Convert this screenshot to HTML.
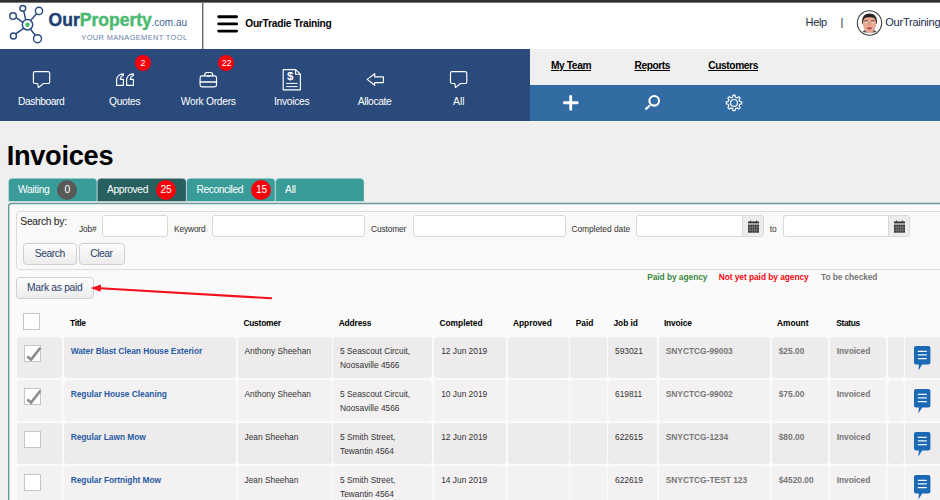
<!DOCTYPE html>
<html lang="en">
<head>
<meta charset="utf-8">
<title>OurTradie - Invoices</title>
<style>
html,body{margin:0;padding:0}
body{width:940px;height:500px;overflow:hidden;position:relative;background:#efefef;
  font-family:"Liberation Sans",Arial,Helvetica,sans-serif;}
.ab,.t,.c,.cb,.inp,.btn,.tab,.badge,.nbadge{position:absolute}
.t{white-space:pre;display:block}
#topbar{left:0;top:0;width:940px;height:2px;background:#2e2e32}
#topline{left:0;top:2px;width:940px;height:1px;background:#77777a}
#header{left:0;top:3px;width:940px;height:46px;background:#fff}
#hdiv{left:202px;top:3px;width:1px;height:46px;background:#686868;box-shadow:1px 0 0 #c4c4c4}
#nav{left:0;top:48.8px;width:530px;height:71.8px;background:#2a4a7b}
#links{left:530px;top:48.8px;width:410px;height:36.4px;background:#efefef}
#tools{left:530px;top:85px;width:410px;height:35.6px;background:#336ba3}
#navline{left:0;top:120.6px;width:940px;height:1px;background:#f6f6f6}
.nbadge{width:16px;height:16px;border-radius:50%;background:#f8000c;color:#fff;font-size:8.8px;line-height:16px;text-align:center;letter-spacing:-0.2px}
.tab{top:178px;height:24px;background:#3a9c98;border-radius:4px 4px 0 0;box-shadow:0 0 0 1px rgba(255,255,255,.5)}
.tab.on{background:#27605f}
.badge{width:20px;height:20px;border-radius:50%;background:#f8000c;color:#fff;font-size:10.3px;line-height:20px;text-align:center;letter-spacing:-0.25px;top:179.6px}
#panel{left:8px;top:202px;width:960px;height:320px;background:#fafafa;border:1px solid #6a9e9c;border-radius:3px;box-sizing:border-box;box-shadow:inset 1px 1px 0 #bfd6d5}
#sbox{left:16.4px;top:211.2px;width:960px;height:58.6px;border:1px solid #dcdcdc;border-radius:4px;box-sizing:border-box;background:#f9f9f9}
.inp{top:215px;height:21.7px;background:#fff;border:1px solid #d9d9d9;border-radius:3px;box-sizing:border-box}
.addon{position:absolute;right:0;top:0;bottom:0;width:19.6px;background:#ececec;border-left:1px solid #d9d9d9}
.btn{border:1px solid #cfcfcf;border-radius:3.5px;box-sizing:border-box;background:linear-gradient(#fdfdfd,#ececec)}
.c{border-radius:3.5px}
.c.a{background:#edebec}
.c.b{background:#f3f1f2}
.cb{width:16.8px;height:16.8px;background:#fff;border:1px solid #c6c6c6;box-sizing:border-box}
</style>
</head>
<body>
<div class="ab" id="header"></div>
<div class="ab" id="topbar"></div>
<div class="ab" id="topline"></div>
<div class="ab" id="hdiv"></div>

<!-- logo -->
<svg class="ab" style="left:0;top:0" width="200" height="49" viewBox="0 0 200 49">
 <g fill="none" stroke="#27487c" stroke-width="1.45">
  <path d="M25.6 19.6 L23.8 11.4 M30.6 20.4 L36.6 13.8 M22.7 22.3 L16.2 17.6 M23.6 28.4 L15.7 33.9 M30.5 29.3 L35.2 35.2"/>
  <circle cx="22.8" cy="8.3" r="2.9" fill="#fff"/>
  <circle cx="39" cy="10.9" r="3.6" fill="#fff"/>
  <circle cx="13" cy="16" r="3.3" fill="#fff"/>
  <circle cx="13.4" cy="36" r="3" fill="#fff"/>
  <circle cx="37.5" cy="38.7" r="4" fill="#fff"/>
  <circle cx="27.5" cy="24.7" r="5.2" fill="#fff"/>
 </g>
 <circle cx="27.5" cy="24.7" r="2.2" fill="#4cb971"/>
 <text x="48.6" y="25.6" font-family="'Liberation Sans',Arial,sans-serif" font-weight="700" font-size="17.8" textLength="103.2" lengthAdjust="spacingAndGlyphs" stroke-width="0.45"><tspan fill="#1f3f73" stroke="#1f3f73">Our</tspan><tspan fill="#4cb971" stroke="#4cb971">Property</tspan></text>
 <text x="151.6" y="25.6" font-family="'Liberation Sans',Arial,sans-serif" font-size="10" fill="#3e5f93" textLength="35.4" lengthAdjust="spacingAndGlyphs">.com.au</text>
 <text x="81.3" y="39.7" font-family="'Liberation Sans',Arial,sans-serif" font-size="7.4" fill="#6781aa" textLength="105.7" lengthAdjust="spacing">YOUR MANAGEMENT TOOL</text>
</svg>

<!-- hamburger -->
<svg class="ab" style="left:216px;top:13px" width="24" height="22" viewBox="0 0 24 22">
 <path d="M2.7 3.8 H20.6 M2.7 10.9 H20.6 M2.7 18.1 H20.6" stroke="#000" stroke-width="2.9" stroke-linecap="round"/>
</svg>

<!-- avatar -->
<svg class="ab" style="left:856px;top:10px" width="27" height="27" viewBox="0 0 27 27">
 <defs><filter id="bl" x="-10%" y="-10%" width="120%" height="120%"><feGaussianBlur stdDeviation="0.45"/></filter>
 <clipPath id="av"><circle cx="13.5" cy="13" r="10.8"/></clipPath></defs>
 <circle cx="13.5" cy="13" r="12.2" fill="#fff" stroke="#3a3a3a" stroke-width="1.05"/>
 <g clip-path="url(#av)"><g filter="url(#bl)">
  <path d="M6.4 21.4 L9.6 19.6 L17.4 19.6 L20.6 21.4 L20.2 22.4 L6.8 22.4 Z" fill="#5b514e"/>
  <path d="M6.1 13.4 C5.4 6.6 9 3.6 13.5 3.6 C18 3.6 21.6 6.6 20.9 13.4 L19.6 14 L7.4 14 Z" fill="#2b2421"/>
  <path d="M7.6 9.8 C6.4 12.6 6.6 16.6 8.6 19.8 C10 22.2 12 23.3 13.5 23.3 C15 23.3 17 22.2 18.4 19.8 C20.4 16.6 20.6 12.6 19.4 9.8 C18.2 7.4 16 7 13.5 7.3 C11 7 8.8 7.4 7.6 9.8 Z" fill="#eaa993"/>
  <path d="M8.4 11 Q10.1 10.1 11.8 11 M15.2 11 Q16.9 10.1 18.6 11" stroke="#4a342c" stroke-width="0.9" fill="none"/>
  <ellipse cx="10.1" cy="12.5" rx="1.2" ry="0.8" fill="#d9dee2"/>
  <ellipse cx="16.9" cy="12.5" rx="1.2" ry="0.8" fill="#d9dee2"/>
  <path d="M13.5 12 V15.4" stroke="#d9927e" stroke-width="1.4"/>
  <ellipse cx="13.5" cy="18.3" rx="2.4" ry="1.1" fill="#a8404f"/>
 </g></g>
</svg>

<div class="ab" id="nav"></div>
<div class="ab" id="links"></div>
<div class="ab" id="tools"></div>
<div class="ab" id="navline"></div>

<!-- nav icons -->
<svg class="ab" style="left:0;top:49px" width="530" height="71" viewBox="0 49 530 71" fill="none" stroke="#fff" stroke-width="1.15" stroke-linejoin="round" stroke-linecap="round">
 <!-- dashboard bubble -->
 <path id="bub" d="M34.9 71.6 H48.2 A1.5 1.5 0 0 1 49.7 73.1 V82 A1.5 1.5 0 0 1 48.2 83.5 H43.4 L38.4 87.6 L37.7 83.5 H34.9 A1.5 1.5 0 0 1 33.4 82 V73.1 A1.5 1.5 0 0 1 34.9 71.6 Z"/>
 <!-- quotes -->
 <path id="q" d="M123.4 73.9 C119.4 74 116.6 76.6 116.6 80.6 V85.3 H123.4 V79.4 H120.3 C120.4 77.4 121.5 75.9 123.4 75.5 Z"/>
 <use href="#q" x="10" y="0"/>
 <!-- briefcase -->
 <rect x="200.1" y="75.8" width="16.4" height="11" rx="1.9"/>
 <path d="M200.1 82 H216.5" stroke-width="1.5"/><path d="M204.7 75.6 V74.8 C204.7 73.1 205.7 72.5 207.2 72.5 H210.2 C211.7 72.5 212.7 73.1 212.7 74.8 V75.6 M207.2 76.2 H209.6"/>
 <!-- invoice -->
 <path d="M283.2 69.6 H295.6 L300.4 74.2 V89.8 H283.2 Z M295.6 69.6 V74.2 H300.4"/>
 <path d="M286.4 83.4 H297.2 M286.4 86.6 H297.2" stroke-width="1"/>
 <!-- allocate arrow -->
 <path d="M367.2 79.4 L374.7 73.7 V76.8 H383.4 V82.6 H374.7 V85.3 Z"/>
 <!-- all bubble -->
 <use href="#bub" x="417.1" y="0"/>
</svg>
<span class="t" style="left:287.1px;top:69.9px;font-size:11.5px;line-height:12px;font-weight:700;color:#fff;letter-spacing:0">$</span>

<div class="nbadge" style="left:134.8px;top:55.4px">2</div>
<div class="nbadge" style="left:218.4px;top:55.3px">22</div>

<!-- tool icons -->
<svg class="ab" style="left:530px;top:85px" width="410" height="36" viewBox="530 85 410 36" fill="none" stroke="#fff" stroke-linecap="round">
 <path d="M564.3 102.8 H577.2 M570.7 96.4 V109.3" stroke-width="2.9"/>
 <circle cx="654.2" cy="100.8" r="4.8" stroke-width="2.1"/>
 <path d="M649.3 106 L646 108.9" stroke-width="2.1"/>
 <g stroke-width="1.15" stroke-linejoin="round">
  <circle cx="734" cy="102.9" r="3.4"/>
  <path d="M732.62 97.16 L732.96 95.17 L735.04 95.17 L735.38 97.16 L737.08 97.87 L738.73 96.70 L740.20 98.17 L739.03 99.82 L739.74 101.52 L741.73 101.86 L741.73 103.94 L739.74 104.28 L739.03 105.98 L740.20 107.63 L738.73 109.10 L737.08 107.93 L735.38 108.64 L735.04 110.63 L732.96 110.63 L732.62 108.64 L730.92 107.93 L729.27 109.10 L727.80 107.63 L728.97 105.98 L728.26 104.28 L726.27 103.94 L726.27 101.86 L728.26 101.52 L728.97 99.82 L727.80 98.17 L729.27 96.70 L730.92 97.87 Z"/>
 </g>
</svg>

<!-- tabs -->
<svg class="ab" style="left:0;top:170px" width="940" height="330" viewBox="0 170 940 330">
 <rect x="8.7" y="203.5" width="960" height="320" rx="3" fill="#fafafa" stroke="#679a98" stroke-width="1.4"/>
 <g stroke="rgba(255,255,255,.55)" stroke-width="0.8">
  <path d="M8.4 201.6 V182.2 a4 4 0 0 1 4 -4 H93.1 a4 4 0 0 1 4 4 V201.6 Z" fill="#3a9c98"/>
  <path d="M186.4 201.6 V182.2 a4 4 0 0 1 4 -4 H271.2 a4 4 0 0 1 4 4 V201.6 Z" fill="#3a9c98"/>
  <path d="M275.3 201.6 V182.2 a4 4 0 0 1 4 -4 H360.1 a4 4 0 0 1 4 4 V201.6 Z" fill="#3a9c98"/>
  <path d="M97.2 201.6 V182.2 a4 4 0 0 1 4 -4 H182.3 a4 4 0 0 1 4 4 V201.6 Z" fill="#27605f"/>
 </g>
</svg>
<div class="badge" style="left:57.3px;background:#595959">0</div>
<div class="badge" style="left:156.1px">25</div>
<div class="badge" style="left:251.4px">15</div>

<div class="ab" id="sbox"></div>
<div class="inp" style="left:102.4px;width:65.3px"></div>
<div class="inp" style="left:212px;width:152.6px"></div>
<div class="inp" style="left:412.5px;width:153px"></div>
<div class="inp" style="left:636.2px;width:127.5px"><div class="addon"></div></div>
<div class="inp" style="left:782.5px;width:127.2px"><div class="addon"></div></div>
<!-- calendar icons -->
<svg class="ab" style="left:748px;top:220px" width="12" height="14" viewBox="0 0 12 14"><use href="#cal"/></svg>
<svg class="ab" style="left:894px;top:220px" width="12" height="14" viewBox="0 0 12 14">
 <g id="cal"><path d="M0 1.5 H11 V3.4 H0 Z" fill="#333"/><path d="M2.5 0.5 V1.8 M8.5 0.5 V1.8" stroke="#333" stroke-width="1.1"/>
 <path d="M0 4.6 H11 V12.7 H0 Z" fill="#333"/>
 <path d="M2.2 4.9 V12.7 M4.4 4.9 V12.7 M6.6 4.9 V12.7 M8.8 4.9 V12.7 M0 7.3 H11 M0 10 H11" stroke="#a8a8a8" stroke-width="0.5" fill="none"/></g>
</svg>

<div class="btn" style="left:23px;top:243px;width:53.6px;height:22px"></div>
<div class="btn" style="left:79px;top:243px;width:45.6px;height:22px"></div>
<div class="btn" style="left:16.4px;top:276.5px;width:77.4px;height:22px"></div>

<!-- header checkbox -->
<div class="cb" style="left:23.1px;top:313.1px"></div>

<div class="c a" style="left:17.2px;top:336.8px;width:45.0px;height:41.4px"></div>
<div class="c a" style="left:64.3px;top:336.8px;width:171.4px;height:41.4px"></div>
<div class="c a" style="left:237.5px;top:336.8px;width:94.5px;height:41.4px"></div>
<div class="c a" style="left:333.2px;top:336.8px;width:99.3px;height:41.4px"></div>
<div class="c a" style="left:434.2px;top:336.8px;width:71.5px;height:41.4px"></div>
<div class="c a" style="left:507.5px;top:336.8px;width:61.2px;height:41.4px"></div>
<div class="c a" style="left:570.2px;top:336.8px;width:36.5px;height:41.4px"></div>
<div class="c a" style="left:608.2px;top:336.8px;width:48.8px;height:41.4px"></div>
<div class="c a" style="left:658.5px;top:336.8px;width:111.5px;height:41.4px"></div>
<div class="c a" style="left:771.7px;top:336.8px;width:56.8px;height:41.4px"></div>
<div class="c a" style="left:830.1px;top:336.8px;width:55.8px;height:41.4px"></div>
<div class="c a" style="left:887.5px;top:336.8px;width:16.0px;height:41.4px"></div>
<div class="c a" style="left:905.1px;top:336.8px;width:54.9px;height:41.4px"></div>
<div class="cb" style="left:24.3px;top:345.0px"><svg viewBox="0 0 17 17" width="17" height="17" style="position:absolute;left:0;top:0"><path d="M2.3 10.4 L6.1 13.6 L15.4 1.8" fill="none" stroke="#8c8c8c" stroke-width="2.6"/></svg></div>
<svg class="ab" style="left:914.4px;top:345.6px" width="17" height="25" viewBox="0 0 17 25"><path d="M2 0 H14.4 A2 2 0 0 1 16.4 2 V16.6 A2 2 0 0 1 14.4 18.6 H8.2 L4.4 24.6 L4.9 18.6 H2 A2 2 0 0 1 0 16.6 V2 A2 2 0 0 1 2 0 Z" fill="#1b69b4"/><path d="M3.8 5.4 H12.8 M3.8 8.9 H12.8 M3.8 12.5 H12.8" stroke="#f2f6fa" stroke-width="1.25"/></svg>
<div class="c b" style="left:17.2px;top:379.8px;width:45.0px;height:41.4px"></div>
<div class="c b" style="left:64.3px;top:379.8px;width:171.4px;height:41.4px"></div>
<div class="c b" style="left:237.5px;top:379.8px;width:94.5px;height:41.4px"></div>
<div class="c b" style="left:333.2px;top:379.8px;width:99.3px;height:41.4px"></div>
<div class="c b" style="left:434.2px;top:379.8px;width:71.5px;height:41.4px"></div>
<div class="c b" style="left:507.5px;top:379.8px;width:61.2px;height:41.4px"></div>
<div class="c b" style="left:570.2px;top:379.8px;width:36.5px;height:41.4px"></div>
<div class="c b" style="left:608.2px;top:379.8px;width:48.8px;height:41.4px"></div>
<div class="c b" style="left:658.5px;top:379.8px;width:111.5px;height:41.4px"></div>
<div class="c b" style="left:771.7px;top:379.8px;width:56.8px;height:41.4px"></div>
<div class="c b" style="left:830.1px;top:379.8px;width:55.8px;height:41.4px"></div>
<div class="c b" style="left:887.5px;top:379.8px;width:16.0px;height:41.4px"></div>
<div class="c b" style="left:905.1px;top:379.8px;width:54.9px;height:41.4px"></div>
<div class="cb" style="left:24.3px;top:388.0px"><svg viewBox="0 0 17 17" width="17" height="17" style="position:absolute;left:0;top:0"><path d="M2.3 10.4 L6.1 13.6 L15.4 1.8" fill="none" stroke="#8c8c8c" stroke-width="2.6"/></svg></div>
<svg class="ab" style="left:914.4px;top:388.6px" width="17" height="25" viewBox="0 0 17 25"><path d="M2 0 H14.4 A2 2 0 0 1 16.4 2 V16.6 A2 2 0 0 1 14.4 18.6 H8.2 L4.4 24.6 L4.9 18.6 H2 A2 2 0 0 1 0 16.6 V2 A2 2 0 0 1 2 0 Z" fill="#1b69b4"/><path d="M3.8 5.4 H12.8 M3.8 8.9 H12.8 M3.8 12.5 H12.8" stroke="#f2f6fa" stroke-width="1.25"/></svg>
<div class="c a" style="left:17.2px;top:422.8px;width:45.0px;height:41.4px"></div>
<div class="c a" style="left:64.3px;top:422.8px;width:171.4px;height:41.4px"></div>
<div class="c a" style="left:237.5px;top:422.8px;width:94.5px;height:41.4px"></div>
<div class="c a" style="left:333.2px;top:422.8px;width:99.3px;height:41.4px"></div>
<div class="c a" style="left:434.2px;top:422.8px;width:71.5px;height:41.4px"></div>
<div class="c a" style="left:507.5px;top:422.8px;width:61.2px;height:41.4px"></div>
<div class="c a" style="left:570.2px;top:422.8px;width:36.5px;height:41.4px"></div>
<div class="c a" style="left:608.2px;top:422.8px;width:48.8px;height:41.4px"></div>
<div class="c a" style="left:658.5px;top:422.8px;width:111.5px;height:41.4px"></div>
<div class="c a" style="left:771.7px;top:422.8px;width:56.8px;height:41.4px"></div>
<div class="c a" style="left:830.1px;top:422.8px;width:55.8px;height:41.4px"></div>
<div class="c a" style="left:887.5px;top:422.8px;width:16.0px;height:41.4px"></div>
<div class="c a" style="left:905.1px;top:422.8px;width:54.9px;height:41.4px"></div>
<div class="cb" style="left:24.3px;top:431.0px"></div>
<svg class="ab" style="left:914.4px;top:431.6px" width="17" height="25" viewBox="0 0 17 25"><path d="M2 0 H14.4 A2 2 0 0 1 16.4 2 V16.6 A2 2 0 0 1 14.4 18.6 H8.2 L4.4 24.6 L4.9 18.6 H2 A2 2 0 0 1 0 16.6 V2 A2 2 0 0 1 2 0 Z" fill="#1b69b4"/><path d="M3.8 5.4 H12.8 M3.8 8.9 H12.8 M3.8 12.5 H12.8" stroke="#f2f6fa" stroke-width="1.25"/></svg>
<div class="c b" style="left:17.2px;top:465.7px;width:45.0px;height:41.4px"></div>
<div class="c b" style="left:64.3px;top:465.7px;width:171.4px;height:41.4px"></div>
<div class="c b" style="left:237.5px;top:465.7px;width:94.5px;height:41.4px"></div>
<div class="c b" style="left:333.2px;top:465.7px;width:99.3px;height:41.4px"></div>
<div class="c b" style="left:434.2px;top:465.7px;width:71.5px;height:41.4px"></div>
<div class="c b" style="left:507.5px;top:465.7px;width:61.2px;height:41.4px"></div>
<div class="c b" style="left:570.2px;top:465.7px;width:36.5px;height:41.4px"></div>
<div class="c b" style="left:608.2px;top:465.7px;width:48.8px;height:41.4px"></div>
<div class="c b" style="left:658.5px;top:465.7px;width:111.5px;height:41.4px"></div>
<div class="c b" style="left:771.7px;top:465.7px;width:56.8px;height:41.4px"></div>
<div class="c b" style="left:830.1px;top:465.7px;width:55.8px;height:41.4px"></div>
<div class="c b" style="left:887.5px;top:465.7px;width:16.0px;height:41.4px"></div>
<div class="c b" style="left:905.1px;top:465.7px;width:54.9px;height:41.4px"></div>
<div class="cb" style="left:24.3px;top:473.9px"></div>
<svg class="ab" style="left:914.4px;top:474.5px" width="17" height="25" viewBox="0 0 17 25"><path d="M2 0 H14.4 A2 2 0 0 1 16.4 2 V16.6 A2 2 0 0 1 14.4 18.6 H8.2 L4.4 24.6 L4.9 18.6 H2 A2 2 0 0 1 0 16.6 V2 A2 2 0 0 1 2 0 Z" fill="#1b69b4"/><path d="M3.8 5.4 H12.8 M3.8 8.9 H12.8 M3.8 12.5 H12.8" stroke="#f2f6fa" stroke-width="1.25"/></svg>

<span class="t" style="left:805.50px;top:16.00px;font-size:11.0px;line-height:13.2px;letter-spacing:-0.300px;color:#1c2b4a;">Help</span>
<span class="t" style="left:840.60px;top:16.00px;font-size:11.0px;line-height:13.2px;letter-spacing:0.000px;color:#1c2b4a;">|</span>
<span class="t" style="left:885.30px;top:16.00px;font-size:11.0px;line-height:13.2px;letter-spacing:-0.245px;color:#1c2b4a;">OurTraining</span>
<span class="t" style="left:245.20px;top:18.00px;font-size:10.2px;line-height:12.24px;letter-spacing:-0.232px;color:#000;font-weight:700;">OurTradie Training</span>
<span class="t" style="left:17.90px;top:96.00px;font-size:10.3px;line-height:12.36px;letter-spacing:-0.431px;color:#fff;">Dashboard</span>
<span class="t" style="left:109.00px;top:96.00px;font-size:10.3px;line-height:12.36px;letter-spacing:-0.330px;color:#fff;">Quotes</span>
<span class="t" style="left:180.80px;top:96.00px;font-size:10.3px;line-height:12.36px;letter-spacing:-0.302px;color:#fff;">Work Orders</span>
<span class="t" style="left:274.00px;top:96.00px;font-size:10.3px;line-height:12.36px;letter-spacing:-0.304px;color:#fff;">Invoices</span>
<span class="t" style="left:357.70px;top:96.00px;font-size:10.3px;line-height:12.36px;letter-spacing:-0.358px;color:#fff;">Allocate</span>
<span class="t" style="left:453.00px;top:96.00px;font-size:10.3px;line-height:12.36px;letter-spacing:0.072px;color:#fff;">All</span>
<span class="t" style="left:551.00px;top:60.00px;font-size:10.2px;line-height:12.24px;letter-spacing:-0.397px;color:#000;font-weight:700;text-decoration:underline;">My Team</span>
<span class="t" style="left:634.50px;top:60.00px;font-size:10.2px;line-height:12.24px;letter-spacing:-0.438px;color:#000;font-weight:700;text-decoration:underline;">Reports</span>
<span class="t" style="left:708.20px;top:60.00px;font-size:10.2px;line-height:12.24px;letter-spacing:-0.381px;color:#000;font-weight:700;text-decoration:underline;">Customers</span>
<span class="t" style="left:6.70px;top:140.00px;font-size:27.2px;line-height:32.64px;letter-spacing:-0.283px;color:#000;font-weight:700;">Invoices</span>
<span class="t" style="left:18.00px;top:184.00px;font-size:10.3px;line-height:12.36px;letter-spacing:-0.371px;color:#fff;">Waiting</span>
<span class="t" style="left:107.00px;top:184.00px;font-size:10.3px;line-height:12.36px;letter-spacing:-0.379px;color:#fff;">Approved</span>
<span class="t" style="left:196.40px;top:184.00px;font-size:10.3px;line-height:12.36px;letter-spacing:-0.424px;color:#fff;">Reconciled</span>
<span class="t" style="left:285.00px;top:184.00px;font-size:10.3px;line-height:12.36px;letter-spacing:-0.228px;color:#fff;">All</span>
<span class="t" style="left:20.30px;top:216.00px;font-size:10.3px;line-height:12.36px;letter-spacing:-0.273px;color:#222;">Search by:</span>
<span class="t" style="left:79.00px;top:224.00px;font-size:8.37px;line-height:10.04px;letter-spacing:-0.193px;color:#333;">Job#</span>
<span class="t" style="left:174.10px;top:224.00px;font-size:8.37px;line-height:10.04px;letter-spacing:-0.162px;color:#333;">Keyword</span>
<span class="t" style="left:371.00px;top:224.00px;font-size:8.37px;line-height:10.04px;letter-spacing:-0.121px;color:#333;">Customer</span>
<span class="t" style="left:571.40px;top:224.00px;font-size:8.37px;line-height:10.04px;letter-spacing:-0.021px;color:#333;">Completed date</span>
<span class="t" style="left:769.80px;top:224.00px;font-size:8.37px;line-height:10.04px;letter-spacing:0.000px;color:#333;">to</span>
<span class="t" style="left:34.80px;top:248.00px;font-size:10.3px;line-height:12.36px;letter-spacing:-0.450px;color:#2b3f6b;">Search</span>
<span class="t" style="left:90.20px;top:248.00px;font-size:10.3px;line-height:12.36px;letter-spacing:-0.450px;color:#2b3f6b;">Clear</span>
<span class="t" style="left:27.10px;top:282.00px;font-size:10.3px;line-height:12.36px;letter-spacing:-0.302px;color:#2b3f6b;">Mark as paid</span>
<span class="t" style="left:647.20px;top:272.00px;font-size:8.37px;line-height:10.04px;letter-spacing:-0.047px;color:#3b873e;font-weight:700;">Paid by agency</span>
<span class="t" style="left:718.70px;top:272.00px;font-size:8.37px;line-height:10.04px;letter-spacing:-0.048px;color:#f6060f;font-weight:700;">Not yet paid by agency</span>
<span class="t" style="left:821.10px;top:272.00px;font-size:8.37px;line-height:10.04px;letter-spacing:-0.095px;color:#777;font-weight:700;">To be checked</span>
<span class="t" style="left:70.00px;top:318.00px;font-size:8.4px;line-height:10.08px;letter-spacing:-0.277px;color:#000;font-weight:700;">Title</span>
<span class="t" style="left:243.40px;top:318.00px;font-size:8.4px;line-height:10.08px;letter-spacing:-0.219px;color:#000;font-weight:700;">Customer</span>
<span class="t" style="left:338.70px;top:318.00px;font-size:8.4px;line-height:10.08px;letter-spacing:-0.142px;color:#000;font-weight:700;">Address</span>
<span class="t" style="left:439.50px;top:318.00px;font-size:8.4px;line-height:10.08px;letter-spacing:-0.020px;color:#000;font-weight:700;">Completed</span>
<span class="t" style="left:513.00px;top:318.00px;font-size:8.4px;line-height:10.08px;letter-spacing:-0.039px;color:#000;font-weight:700;">Approved</span>
<span class="t" style="left:575.70px;top:318.00px;font-size:8.4px;line-height:10.08px;letter-spacing:-0.024px;color:#000;font-weight:700;">Paid</span>
<span class="t" style="left:613.50px;top:318.00px;font-size:8.4px;line-height:10.08px;letter-spacing:-0.069px;color:#000;font-weight:700;">Job id</span>
<span class="t" style="left:663.90px;top:318.00px;font-size:8.4px;line-height:10.08px;letter-spacing:-0.133px;color:#000;font-weight:700;">Invoice</span>
<span class="t" style="left:777.00px;top:318.00px;font-size:8.4px;line-height:10.08px;letter-spacing:-0.028px;color:#000;font-weight:700;">Amount</span>
<span class="t" style="left:836.30px;top:318.00px;font-size:8.4px;line-height:10.08px;letter-spacing:-0.327px;color:#000;font-weight:700;">Status</span>
<span class="t" style="left:70.70px;top:346.00px;font-size:8.4px;line-height:10.08px;letter-spacing:-0.040px;color:#2a5ba3;font-weight:700;">Water Blast Clean House Exterior</span>
<span class="t" style="left:244.50px;top:346.00px;font-size:8.37px;line-height:10.04px;letter-spacing:0.000px;color:#333;">Anthony Sheehan</span>
<span class="t" style="left:340.00px;top:346.00px;font-size:8.37px;line-height:10.04px;letter-spacing:0.000px;color:#333;">5 Seascout Circuit,</span>
<span class="t" style="left:340.00px;top:360.00px;font-size:8.37px;line-height:10.04px;letter-spacing:0.000px;color:#333;">Noosaville 4566</span>
<span class="t" style="left:441.20px;top:346.00px;font-size:8.37px;line-height:10.04px;letter-spacing:0.000px;color:#333;">12 Jun 2019</span>
<span class="t" style="left:615.00px;top:346.00px;font-size:8.37px;line-height:10.04px;letter-spacing:0.000px;color:#333;">593021</span>
<span class="t" style="left:665.70px;top:346.00px;font-size:8.4px;line-height:10.08px;letter-spacing:0.000px;color:#777;font-weight:700;">SNYCTCG-99003</span>
<span class="t" style="left:778.70px;top:346.00px;font-size:8.4px;line-height:10.08px;letter-spacing:0.000px;color:#777;font-weight:700;">$25.00</span>
<span class="t" style="left:836.70px;top:346.00px;font-size:8.4px;line-height:10.08px;letter-spacing:-0.051px;color:#777;font-weight:700;">Invoiced</span>
<span class="t" style="left:70.70px;top:389.00px;font-size:8.4px;line-height:10.08px;letter-spacing:-0.028px;color:#2a5ba3;font-weight:700;">Regular House Cleaning</span>
<span class="t" style="left:244.50px;top:389.00px;font-size:8.37px;line-height:10.04px;letter-spacing:0.000px;color:#333;">Anthony Sheehan</span>
<span class="t" style="left:340.00px;top:389.00px;font-size:8.37px;line-height:10.04px;letter-spacing:0.000px;color:#333;">5 Seascout Circuit,</span>
<span class="t" style="left:340.00px;top:403.00px;font-size:8.37px;line-height:10.04px;letter-spacing:0.000px;color:#333;">Noosaville 4566</span>
<span class="t" style="left:441.20px;top:389.00px;font-size:8.37px;line-height:10.04px;letter-spacing:0.000px;color:#333;">10 Jun 2019</span>
<span class="t" style="left:615.00px;top:389.00px;font-size:8.37px;line-height:10.04px;letter-spacing:0.000px;color:#333;">619811</span>
<span class="t" style="left:665.70px;top:389.00px;font-size:8.4px;line-height:10.08px;letter-spacing:0.000px;color:#777;font-weight:700;">SNYCTCG-99002</span>
<span class="t" style="left:778.70px;top:389.00px;font-size:8.4px;line-height:10.08px;letter-spacing:0.000px;color:#777;font-weight:700;">$75.00</span>
<span class="t" style="left:836.70px;top:389.00px;font-size:8.4px;line-height:10.08px;letter-spacing:-0.051px;color:#777;font-weight:700;">Invoiced</span>
<span class="t" style="left:70.70px;top:432.00px;font-size:8.4px;line-height:10.08px;letter-spacing:-0.049px;color:#2a5ba3;font-weight:700;">Regular Lawn Mow</span>
<span class="t" style="left:244.50px;top:432.00px;font-size:8.37px;line-height:10.04px;letter-spacing:0.000px;color:#333;">Jean Sheehan</span>
<span class="t" style="left:340.00px;top:432.00px;font-size:8.37px;line-height:10.04px;letter-spacing:0.000px;color:#333;">5 Smith Street,</span>
<span class="t" style="left:340.00px;top:446.00px;font-size:8.37px;line-height:10.04px;letter-spacing:0.000px;color:#333;">Tewantin 4564</span>
<span class="t" style="left:441.20px;top:432.00px;font-size:8.37px;line-height:10.04px;letter-spacing:0.000px;color:#333;">12 Jun 2019</span>
<span class="t" style="left:615.00px;top:432.00px;font-size:8.37px;line-height:10.04px;letter-spacing:0.000px;color:#333;">622615</span>
<span class="t" style="left:665.70px;top:432.00px;font-size:8.4px;line-height:10.08px;letter-spacing:0.000px;color:#777;font-weight:700;">SNYCTCG-1234</span>
<span class="t" style="left:778.70px;top:432.00px;font-size:8.4px;line-height:10.08px;letter-spacing:0.000px;color:#777;font-weight:700;">$80.00</span>
<span class="t" style="left:836.70px;top:432.00px;font-size:8.4px;line-height:10.08px;letter-spacing:-0.051px;color:#777;font-weight:700;">Invoiced</span>
<span class="t" style="left:70.70px;top:475.00px;font-size:8.4px;line-height:10.08px;letter-spacing:-0.039px;color:#2a5ba3;font-weight:700;">Regular Fortnight Mow</span>
<span class="t" style="left:244.50px;top:475.00px;font-size:8.37px;line-height:10.04px;letter-spacing:0.000px;color:#333;">Jean Sheehan</span>
<span class="t" style="left:340.00px;top:475.00px;font-size:8.37px;line-height:10.04px;letter-spacing:0.000px;color:#333;">5 Smith Street,</span>
<span class="t" style="left:340.00px;top:489.00px;font-size:8.37px;line-height:10.04px;letter-spacing:0.000px;color:#333;">Tewantin 4564</span>
<span class="t" style="left:441.20px;top:475.00px;font-size:8.37px;line-height:10.04px;letter-spacing:0.000px;color:#333;">14 Jun 2019</span>
<span class="t" style="left:615.00px;top:475.00px;font-size:8.37px;line-height:10.04px;letter-spacing:0.000px;color:#333;">622619</span>
<span class="t" style="left:665.70px;top:475.00px;font-size:8.4px;line-height:10.08px;letter-spacing:0.000px;color:#777;font-weight:700;">SNYCTCG-TEST 123</span>
<span class="t" style="left:778.70px;top:475.00px;font-size:8.4px;line-height:10.08px;letter-spacing:0.000px;color:#777;font-weight:700;">$4520.00</span>
<span class="t" style="left:836.70px;top:475.00px;font-size:8.4px;line-height:10.08px;letter-spacing:-0.051px;color:#777;font-weight:700;">Invoiced</span>

<!-- red arrow -->
<svg class="ab" style="left:85px;top:280px" width="195" height="24" viewBox="85 280 195 24">
 <path d="M100 288.3 L271.2 298.3" stroke="#f2101c" stroke-width="2.1" stroke-linecap="round" fill="none"/>
 <path d="M90.6 288.1 L101 284.6 L100.6 291.8 Z" fill="#f2101c"/>
</svg>
</body>
</html>
